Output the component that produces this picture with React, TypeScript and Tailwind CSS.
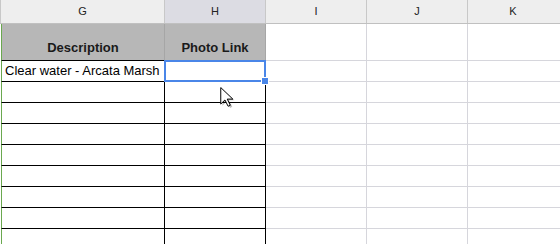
import React from "react";

const font = { fontFamily: '"Liberation Sans", Arial, sans-serif' };

function DataRow({ text }: { text?: string }) {
  return (
    <div className="flex h-[21px]">
      <div className="w-[1px] bg-white" />
      <div className="w-[164px] border-l border-l-[#6aa84f] border-r border-r-black border-b border-b-black pl-[3px] text-[13px] leading-[20px] text-black whitespace-nowrap overflow-hidden">
        {text}
      </div>
      <div className="w-[101px] border-r border-r-black border-b border-b-black" />
      <div className="w-[101px] border-r border-b border-[#d6d6dc]" />
      <div className="w-[101px] border-r border-b border-[#d6d6dc]" />
      <div className="flex-1 border-b border-[#d6d6dc]" />
    </div>
  );
}

export default function App() {
  return (
    <div className="relative w-[560px] h-[244px] overflow-hidden bg-white" style={font}>
      {/* column headers */}
      <div className="flex h-[24px] border-b border-[#c0c0c0] bg-[#eeeeee] text-[11px] text-[#222]">
        <div className="w-[1px] bg-[#c8c8c8]" />
        <div className="w-[164px] border-r border-[#c8c8c8] flex items-center justify-center">G</div>
        <div className="w-[101px] border-r border-[#c8c8c8] bg-[#dcdce3] flex items-center justify-center">H</div>
        <div className="w-[101px] border-r border-[#c8c8c8] flex items-center justify-center">I</div>
        <div className="w-[101px] border-r border-[#c8c8c8] flex items-center justify-center">J</div>
        <div className="flex-1 flex items-center justify-center pr-[2px]">K</div>
      </div>

      {/* gray title row */}
      <div className="flex h-[37px]">
        <div className="w-[1px] bg-white" />
        <div className="w-[164px] bg-[#b7b7b7] border-l border-l-[#6aa84f] border-r border-r-[#a6a6a6] border-b border-b-black flex items-end justify-center pb-[3px] text-[13px] font-bold text-[#1a1a1a]">
          Description
        </div>
        <div className="w-[101px] bg-[#b7b7b7] border-r border-r-[#a6a6a6] border-b border-b-black flex items-end justify-center pb-[3px] text-[13px] font-bold text-[#1a1a1a]">
          Photo Link
        </div>
        <div className="w-[101px] border-r border-b border-[#d6d6dc]" />
        <div className="w-[101px] border-r border-b border-[#d6d6dc]" />
        <div className="flex-1 border-b border-[#d6d6dc]" />
      </div>

      <DataRow text="Clear water - Arcata Marsh" />
      <DataRow />
      <DataRow />
      <DataRow />
      <DataRow />
      <DataRow />
      <DataRow />
      <DataRow />
      <DataRow />

      {/* selection */}
      <div className="absolute left-[164px] top-[60px] w-[102px] h-[22px] border-2 border-[#4a86e8]" />
      <div className="absolute left-[262px] top-[78px] w-[6px] h-[6px] bg-[#4a86e8] outline outline-1 outline-white" />

      {/* cursor */}
      <svg className="absolute left-[220px] top-[87px]" width="18" height="22" viewBox="0 0 16 20">
        <polygon points="2,2 2,17 6,13 9,19 11,18 8,12 13,12" fill="#000" opacity="0.25" />
        <polygon points="0.5,0.5 0.5,15.5 4.3,11.8 7.2,17.5 9.2,16.6 6.4,11 11.5,11" fill="#fff" stroke="#000" strokeWidth="0.9" strokeLinejoin="miter" />
      </svg>
    </div>
  );
}
